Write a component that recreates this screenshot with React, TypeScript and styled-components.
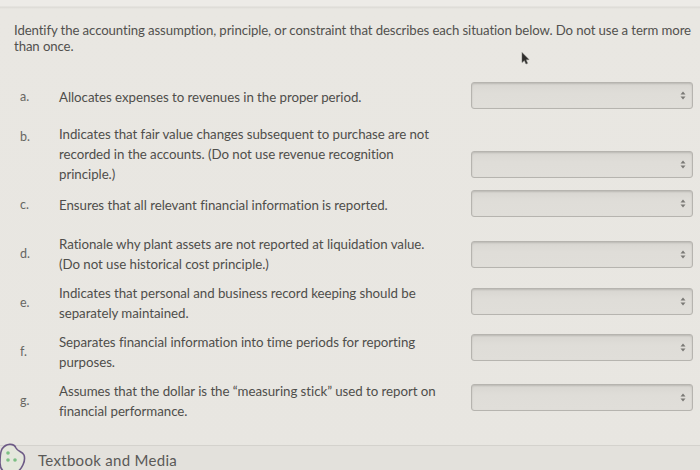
import React from "react";
import styled, { createGlobalStyle } from "styled-components";

const Global = createGlobalStyle`
  html, body { margin: 0; padding: 0; }
  body {
    width: 700px;
    height: 470px;
    overflow: hidden;
    background: #e8e6e1;
    font-family: Lato, "Open Sans", sans-serif;
  }
`;

const Page = styled.div`
  position: relative;
  width: 700px;
  height: 470px;
  overflow: hidden;
  display: flex;
  flex-direction: column;
  background: linear-gradient(#edebe7 0, #edebe7 6px, #dcdad5 7px, #e9e7e2 9px, #e8e6e1 100%);
`;

const Intro = styled.p`
  margin: 22px 6px 0 14px;
  font-size: 13.2px;
  line-height: 16px;
  color: #52514e;
  letter-spacing: -0.1px;
`;

const Rows = styled.div`
  margin-top: 15px;
  display: flex;
  flex-direction: column;
`;

const Row = styled.div<{ $h: number }>`
  height: ${(p) => p.$h}px;
  display: grid;
  grid-template-columns: 20px 39px 412px 222px;
  align-items: center;
`;

const Label = styled.div<{ $top?: boolean }>`
  grid-column: 2;
  font-size: 12.5px;
  color: #676663;
  align-self: ${(p) => (p.$top ? "start" : "center")};
  margin-top: ${(p) => (p.$top ? "3px" : "0")};
  line-height: 20px;
`;

const Text = styled.div`
  grid-column: 3;
  font-size: 13.3px;
  line-height: 20px;
  color: #4f4e4b;
  letter-spacing: -0.05px;
  white-space: nowrap;
`;

const Select = styled.div<{ $shift: number }>`
  grid-column: 4;
  height: 27px;
  box-sizing: border-box;
  border: 1px solid #b6b4af;
  border-radius: 3px;
  background: linear-gradient(#d8d6d1, #dfddd8 40%, #e0ded9);
  box-shadow: inset 0 1px 2px rgba(0, 0, 0, 0.14);
  display: flex;
  align-items: center;
  justify-content: flex-end;
  padding-right: 6px;
  margin-top: ${(p) => (p.$shift > 0 ? p.$shift * 2 : 0)}px;
  margin-bottom: ${(p) => (p.$shift < 0 ? -p.$shift * 2 : 0)}px;
`;

const Footer = styled.div`
  margin-top: auto;
  height: 24px;
  border-top: 1px solid #d4d2cd;
  background: #e3e1dc;
  display: flex;
  align-items: flex-start;
  position: relative;
`;

const FooterText = styled.span`
  margin: 6px 0 0 38px;
  font-size: 15px;
  line-height: 17px;
  color: #5a5957;
  letter-spacing: 0.3px;
`;

const FooterIcon = styled.svg`
  position: absolute;
  left: -4px;
  top: -7px;
`;

const Cursor = styled.svg`
  position: absolute;
  left: 521px;
  top: 52px;
`;

const Arrows = () => (
  <svg width="6" height="9" viewBox="0 0 6 9">
    <path d="M3 0.5 L5.5 3.5 H0.5 Z" fill="#7a7975" />
    <path d="M3 8.5 L5.5 5.5 H0.5 Z" fill="#7a7975" />
  </svg>
);

type Item = {
  label: string;
  lines: string[];
  h: number;
  shift: number;
  top?: boolean;
};

const items: Item[] = [
  { label: "a.", lines: ["Allocates expenses to revenues in the proper period."], h: 55, shift: -1 },
  {
    label: "b.",
    lines: [
      "Indicates that fair value changes subsequent to purchase are not",
      "recorded in the accounts. (Do not use revenue recognition",
      "principle.)",
    ],
    h: 55,
    shift: 10,
    top: true,
  },
  { label: "c.", lines: ["Ensures that all relevant financial information is reported."], h: 51, shift: -1 },
  {
    label: "d.",
    lines: ["Rationale why plant assets are not reported at liquidation value.", "(Do not use historical cost principle.)"],
    h: 48,
    shift: 0,
  },
  {
    label: "e.",
    lines: ["Indicates that personal and business record keeping should be", "separately maintained."],
    h: 49,
    shift: -1,
  },
  {
    label: "f.",
    lines: ["Separates financial information into time periods for reporting", "purposes."],
    h: 50,
    shift: -5,
  },
  {
    label: "g.",
    lines: ["Assumes that the dollar is the \u201cmeasuring stick\u201d used to report on", "financial performance."],
    h: 48,
    shift: -4,
  },
];

export default function App() {
  return (
    <>
      <Global />
      <Page>
        <Intro>
          Identify the accounting assumption, principle, or constraint that describes each situation below. Do not use a
          term more than once.
        </Intro>
        <Rows>
          {items.map((it) => (
            <Row key={it.label} $h={it.h}>
              <Label $top={it.top}>{it.label}</Label>
              <Text>
                {it.lines.map((l, i) => (
                  <React.Fragment key={i}>
                    {i > 0 && <br />}
                    {l}
                  </React.Fragment>
                ))}
              </Text>
              <Select $shift={it.shift}>
                <Arrows />
              </Select>
            </Row>
          ))}
        </Rows>
        <Footer>
          <FooterIcon width="40" height="40" viewBox="0 0 40 40">
            <path
              d="M6 10 C10 4 18 4 20 9 C22 13 26 12 28 16 C30 22 26 30 20 34 C12 38 4 32 4 24 C4 18 4 14 6 10 Z"
              fill="#e4e7dc"
              stroke="#6d5a86"
              strokeWidth="1.6"
            />
            <circle cx="12" cy="14" r="1.8" fill="#7cbf84" />
            <circle cx="12" cy="21" r="1.8" fill="#7cbf84" />
            <circle cx="19" cy="21" r="1.8" fill="#7cbf84" />
          </FooterIcon>
          <FooterText>Textbook and Media</FooterText>
        </Footer>
        <Cursor width="9" height="13" viewBox="0 0 9 13">
          <path d="M1 0.5 L1 10.5 L3.4 8.4 L5 12 L6.6 11.3 L5 7.8 L8 7.6 Z" fill="#2e2d2b" stroke="#6b6a67" strokeWidth="0.5" />
        </Cursor>
      </Page>
    </>
  );
}
